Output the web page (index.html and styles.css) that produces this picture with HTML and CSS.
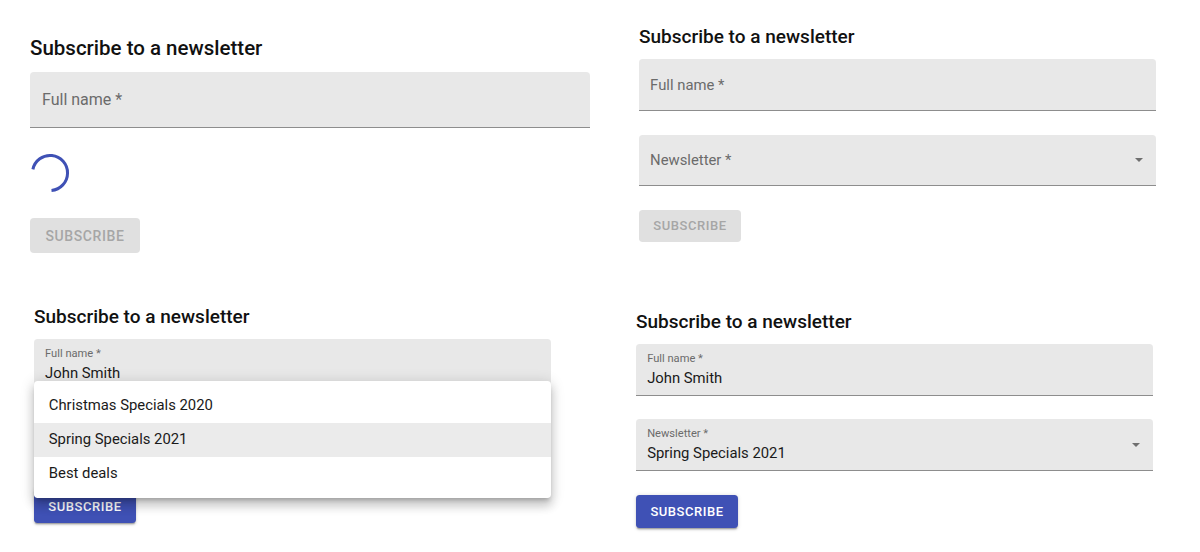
FILE: index.html
```html
<!DOCTYPE html>
<html>
<head>
<meta charset="utf-8">
<link rel="stylesheet" href="styles.css">
</head>
<body>
<main class="board">
  <section class="panel p1">
    <h2 class="title">Subscribe to a newsletter</h2>
    <div class="field wide"><span class="placeholder">Full name *</span></div>
    <div class="spinner">
      <svg width="40" height="40" viewBox="0 0 40 40"><path d="M2.9 16.4 A17.5 17.5 0 1 1 21.5 37.4" fill="none" stroke="#3f51b5" stroke-width="3"/></svg>
    </div>
    <button class="btn disabled">SUBSCRIBE</button>
  </section>

  <section class="panel p2">
    <h2 class="title">Subscribe to a newsletter</h2>
    <div class="field"><span class="placeholder">Full name *</span></div>
    <div class="field select"><span class="placeholder">Newsletter *</span><span class="arrow"></span></div>
    <button class="btn disabled">SUBSCRIBE</button>
  </section>

  <section class="panel p3">
    <h2 class="title">Subscribe to a newsletter</h2>
    <div class="menu-anchor">
      <div class="field filled"><span class="label">Full name *</span><span class="value">John Smith</span></div>
      <div class="field select filled"><span class="arrow"></span></div>
      <ul class="menu">
        <li class="option">Christmas Specials 2020</li>
        <li class="option active">Spring Specials 2021</li>
        <li class="option">Best deals</li>
      </ul>
    </div>
    <button class="btn primary">SUBSCRIBE</button>
  </section>

  <section class="panel p4">
    <h2 class="title">Subscribe to a newsletter</h2>
    <div class="field filled"><span class="label">Full name *</span><span class="value">John Smith</span></div>
    <div class="field select filled"><span class="label">Newsletter *</span><span class="value">Spring Specials 2021</span><span class="arrow"></span></div>
    <button class="btn primary">SUBSCRIBE</button>
  </section>
</main>
</body>
</html>
```

FILE: styles.css
```css
* { box-sizing: border-box; }
html, body { margin: 0; padding: 0; background: #fff; }
body {
  font-family: Roboto, "Liberation Sans", Arial, sans-serif;
  color: rgba(0,0,0,0.87);
  width: 1200px;
  height: 552px;
  overflow: hidden;
}
.board {
  display: grid;
  grid-template-columns: 600px 600px;
  grid-template-rows: 290px 262px;
}
.panel {
  display: flex;
  flex-direction: column;
  align-items: flex-start;
}
.p1 { padding: 36px 0 0 30px; }
.p2 { zoom: 0.928; padding: 28px 0 0 42px; }
.p3 { zoom: 0.928; padding: 17px 0 0 36.6px; }
.p4 { zoom: 0.928; padding: 22.5px 0 0 38.8px; }

.title {
  margin: 0 0 12px;
  font-size: 20.5px;
  line-height: 24px;
  font-weight: 500;
  color: #111;
}
.field {
  position: relative;
  width: 557px;
  height: 56px;
  background: #e8e8e8;
  border-radius: 4px 4px 0 0;
  border-bottom: 1px solid #8d8d8d;
  padding: 0 12px;
  margin-bottom: 25px;
  display: flex;
  flex-direction: column;
  justify-content: center;
}
.field.wide { width: 560px; }
.placeholder {
  font-size: 16px;
  color: #6b6b6b;
  line-height: 20px;
}
.field.filled { justify-content: flex-start; padding-top: 8px; }
.label {
  font-size: 12px;
  line-height: 16px;
  color: #6b6b6b;
}
.value {
  font-size: 16px;
  line-height: 20px;
  margin-top: 3px;
  color: #1a1a1a;
}
.arrow {
  position: absolute;
  right: 14px;
  top: 50%;
  margin-top: -2px;
  width: 0;
  height: 0;
  border-left: 5px solid transparent;
  border-right: 5px solid transparent;
  border-top: 5px solid #6f6f6f;
}
.spinner {
  width: 40px;
  height: 40px;
  margin-bottom: 25px;
}
.spinner svg { display: block; }
.btn {
  height: 35px;
  min-width: 110px;
  padding: 0 14px;
  border: 0;
  border-radius: 4px;
  font-family: inherit;
  font-size: 14px;
  font-weight: 500;
  letter-spacing: 0.6px;
}
.btn.disabled {
  background: #e0e0e0;
  color: #a6a6a6;
}
.btn.primary {
  background: #3f51b5;
  color: #fff;
  height: 36px;
  box-shadow: 0 3px 1px -2px rgba(0,0,0,.2), 0 2px 2px 0 rgba(0,0,0,.14), 0 1px 5px 0 rgba(0,0,0,.12);
}
.menu-anchor { position: relative; }
.menu {
  position: absolute;
  left: 0;
  top: 45px;
  width: 557px;
  margin: 0;
  padding: 9px 0 8px;
  list-style: none;
  background: #fff;
  border-radius: 4px;
  box-shadow: 0 5px 5px -3px rgba(0,0,0,.2), 0 8px 10px 1px rgba(0,0,0,.14), 0 3px 14px 2px rgba(0,0,0,.12);
}
.option {
  height: 36.3px;
  line-height: 36.3px;
  padding: 0 16px;
  font-size: 16px;
  color: #1a1a1a;
}
.option.active { background: #ebebeb; }
```
